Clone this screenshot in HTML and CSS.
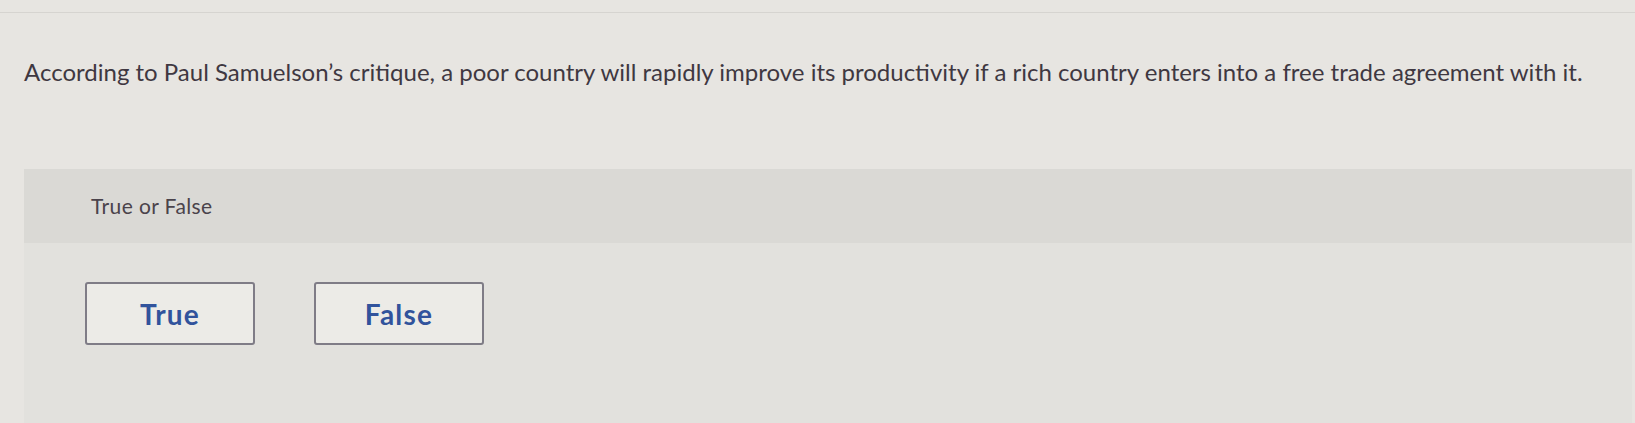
FILE: index.html
```html
<!DOCTYPE html>
<html lang="en">
<head>
  <meta charset="UTF-8" />
  <meta name="viewport" content="width=device-width, initial-scale=1.0" />
  <title>Question</title>
  <link rel="stylesheet" href="styles.css">
</head>
<body>

  <div class="question">
    <p class="prompt">According to Paul Samuelson’s critique, a poor country will rapidly improve its productivity if a rich country enters into a free trade agreement with it.</p>

    <div class="answer-panel">
      <div class="answer-header">True or False</div>
      <div class="answer-choices">
        <button class="choice">True</button>
        <button class="choice">False</button>
      </div>
    </div>
  </div>

</body>
</html>
```

FILE: styles.css
```css
body {
  font-family: Lato, 'Liberation Sans', sans-serif;
  background-color: #e7e5e1;
  margin: 0;
  color: #3f3841;
}

.question {
  border-top: 1px solid #d6d4d0;
  margin-top: 12px;
  padding: 0 3px 0 24px;
}

.prompt {
  margin: 0;
  padding-top: 44px;
  font-size: 24px;
  line-height: 30px;
  height: 112px;
}

.answer-panel {
  background-color: #e2e1dd;
  height: 260px;
}

.answer-header {
  background-color: #dad9d5;
  height: 74px;
  padding: 24px 0 0 67px;
  box-sizing: border-box;
  font-size: 21px;
  letter-spacing: 0.4px;
  color: #4a434b;
}

.answer-choices {
  display: flex;
  gap: 59px;
  padding: 39px 0 0 61px;
}

.choice {
  width: 170px;
  height: 63px;
  background-color: #ecebe7;
  border: 2px solid #7f7c86;
  border-radius: 3px;
  font-family: Lato, 'Liberation Sans', sans-serif;
  font-weight: 700;
  font-size: 28px;
  letter-spacing: 1.2px;
  color: #31539c;
  cursor: pointer;
}
```
